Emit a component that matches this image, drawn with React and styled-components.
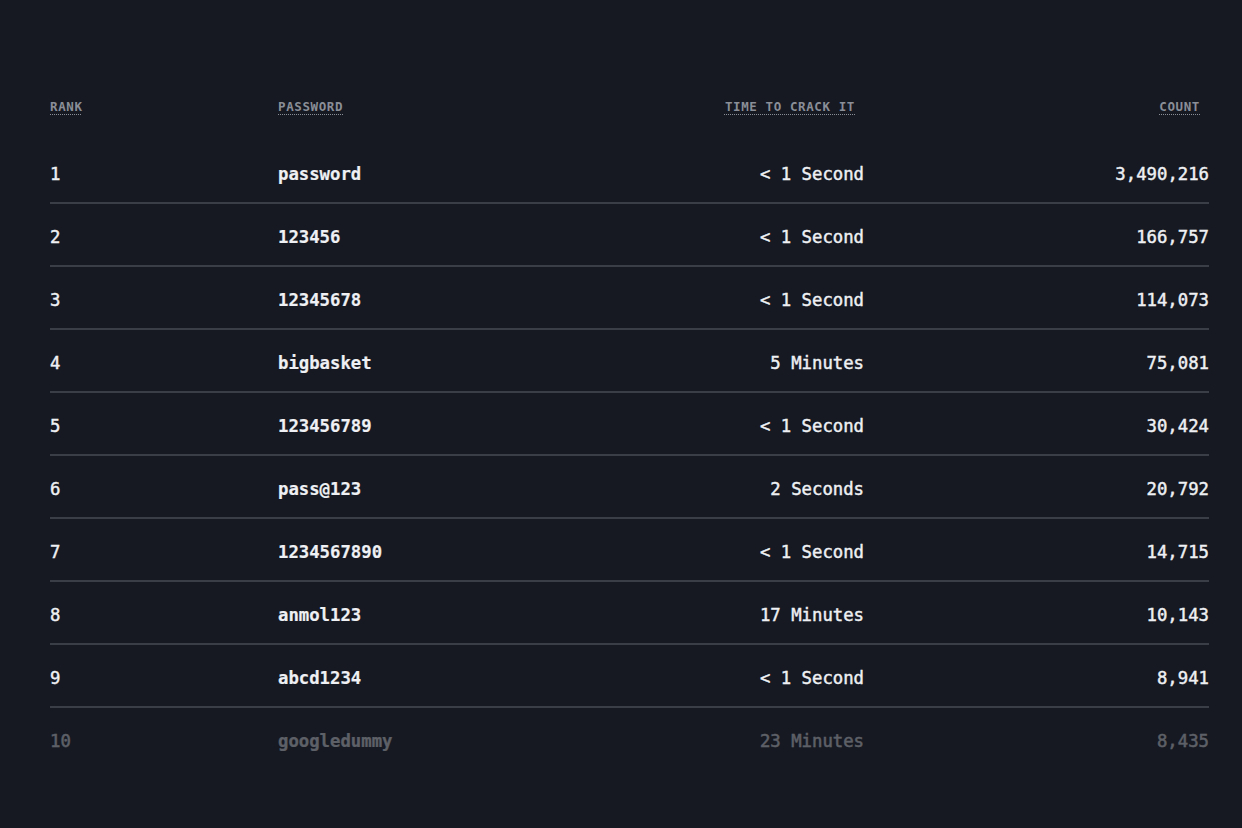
import React from "react";
import styled, { createGlobalStyle } from "styled-components";

const Global = createGlobalStyle`
  html, body { margin: 0; padding: 0; background: #161922; }
  body { font-family: "DejaVu Sans Mono", "Liberation Mono", monospace; }
`;

const Page = styled.div`
  width: 1242px;
  height: 828px;
  box-sizing: border-box;
  padding: 91px 33px 0 50px;
  background: #161922;
  overflow: hidden;
`;

const Table = styled.div`
  display: flex;
  flex-direction: column;
`;

const cols = `228px 336px 250px 345px`;

const HeadRow = styled.div`
  display: grid;
  grid-template-columns: ${cols};
  height: 28px;
  align-items: center;
  margin-bottom: 22px;
`;

const HeadCell = styled.div`
  text-align: ${(p) => (p.$right ? "right" : "left")};
  padding-right: ${(p) => (p.$right ? "9px" : "0")};
`;

const HeadLabel = styled.span`
  font-size: 12.5px;
  font-weight: bold;
  letter-spacing: 0.6px;
  color: #8a8e97;
  text-decoration: underline dotted;
  text-underline-offset: 3px;
  text-decoration-thickness: 1px;
`;

const Row = styled.div`
  display: grid;
  grid-template-columns: ${cols};
  height: 56px;
  padding-top: 9px;
  margin-top: -4px;
  box-sizing: content-box;
  align-items: center;
  border-bottom: 2px solid ${(p) => (p.$last ? "transparent" : "#3a3e47")};
  opacity: ${(p) => (p.$faded ? 0.33 : 1)};
`;

const Cell = styled.div`
  font-size: 17.3px;
  color: #eef0f3;
  font-weight: ${(p) => (p.$bold ? "bold" : "normal")};
  -webkit-text-stroke: ${(p) => (p.$bold ? "0.2px" : "0.45px")} #eef0f3;
  text-align: ${(p) => (p.$right ? "right" : "left")};
  white-space: nowrap;
`;

const data = [
  ["1", "password", "< 1 Second", "3,490,216"],
  ["2", "123456", "< 1 Second", "166,757"],
  ["3", "12345678", "< 1 Second", "114,073"],
  ["4", "bigbasket", "5 Minutes", "75,081"],
  ["5", "123456789", "< 1 Second", "30,424"],
  ["6", "pass@123", "2 Seconds", "20,792"],
  ["7", "1234567890", "< 1 Second", "14,715"],
  ["8", "anmol123", "17 Minutes", "10,143"],
  ["9", "abcd1234", "< 1 Second", "8,941"],
  ["10", "googledummy", "23 Minutes", "8,435"],
];

export default function App() {
  return (
    <>
      <Global />
      <Page>
        <Table>
          <HeadRow>
            <HeadCell><HeadLabel>RANK</HeadLabel></HeadCell>
            <HeadCell><HeadLabel>PASSWORD</HeadLabel></HeadCell>
            <HeadCell $right><HeadLabel>TIME TO CRACK IT</HeadLabel></HeadCell>
            <HeadCell $right><HeadLabel>COUNT</HeadLabel></HeadCell>
          </HeadRow>
          {data.map((r, i) => (
            <Row key={r[0]} $last={i === data.length - 1} $faded={i === data.length - 1}>
              <Cell>{r[0]}</Cell>
              <Cell $bold>{r[1]}</Cell>
              <Cell $right>{r[2]}</Cell>
              <Cell $right>{r[3]}</Cell>
            </Row>
          ))}
        </Table>
      </Page>
    </>
  );
}
